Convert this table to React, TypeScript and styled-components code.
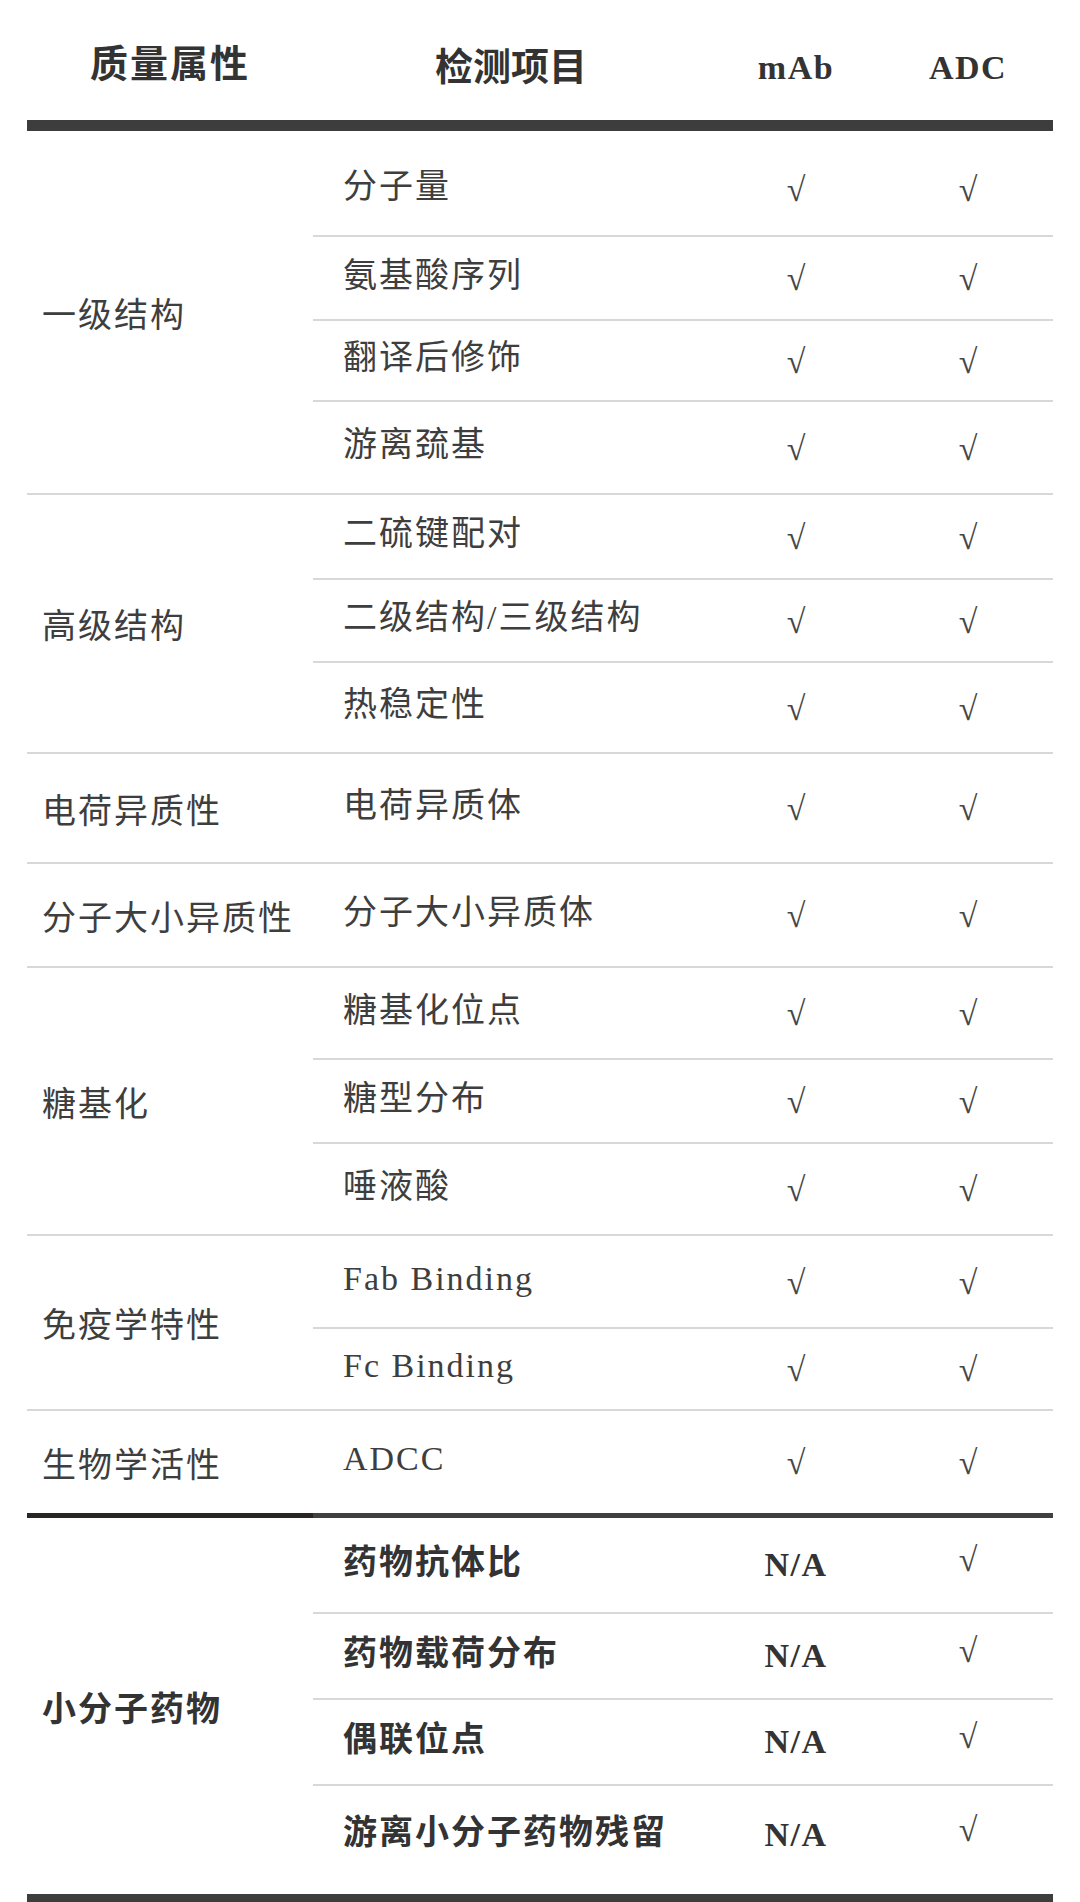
import React from "react";
import styled, { createGlobalStyle } from "styled-components";

const GlobalStyle = createGlobalStyle`
  html, body {
    margin: 0;
    padding: 0;
    background: #ffffff;
  }
  * { box-sizing: border-box; }
`;

const FONT = `"Liberation Serif", "Noto Sans CJK SC", serif`;

const Page = styled.div`
  width: 1080px;
  padding: 0 27px;
  font-family: ${FONT};
  color: #3e3e3e;
`;

const HeaderRow = styled.div`
  display: grid;
  grid-template-columns: 286px 396px 174px 170px;
  height: 131px;
  border-bottom: 11px solid #3d3d3d;
`;

const HeadCell = styled.div<{ $latin?: boolean; $dy: number; $ls: number }>`
  display: flex;
  align-items: center;
  justify-content: center;
  padding-top: ${(p) => p.$dy}px;
  font-weight: 700;
  font-size: ${(p) => (p.$latin ? "34px" : "38px")};
  letter-spacing: ${(p) => p.$ls}px;
  color: #333333;
`;

const Group = styled.div`
  display: grid;
  grid-template-columns: 286px 740px;
`;

const GroupLabel = styled.div<{ $border: number; $color: string; $bold?: boolean }>`
  display: flex;
  align-items: center;
  padding-left: 15px;
  border-top: ${(p) => p.$border}px solid ${(p) => p.$color};
  font-size: 34px;
  letter-spacing: 2px;
  white-space: nowrap;
  font-weight: ${(p) => (p.$bold ? 700 : 400)};
  color: ${(p) => (p.$bold ? "#333333" : "#3e3e3e")};
`;

const SubList = styled.div<{ $border: number; $color: string }>`
  display: flex;
  flex-direction: column;
  border-top: ${(p) => p.$border}px solid ${(p) => p.$color};
`;

const SubRow = styled.div<{ $h: number; $first: boolean; $shift: number }>`
  display: grid;
  grid-template-columns: 396px 174px 170px;
  height: ${(p) => p.$h}px;
  border-top: ${(p) => (p.$first ? "none" : "2px solid #d8d8d8")};
  padding-top: ${(p) => Math.max(p.$shift, 0)}px;
  padding-bottom: ${(p) => Math.max(-p.$shift, 0)}px;
`;

const ItemCell = styled.div<{ $bold?: boolean; $latin?: boolean }>`
  display: flex;
  align-items: center;
  padding-left: 30px;
  padding-bottom: ${(p) => (p.$latin ? "6px" : "12px")};
  font-size: 34px;
  letter-spacing: 2px;
  white-space: nowrap;
  font-weight: ${(p) => (p.$bold ? 700 : 400)};
  color: ${(p) => (p.$bold ? "#333333" : "#3e3e3e")};
`;

const MarkCell = styled.div<{ $na?: boolean; $lift?: boolean }>`
  display: flex;
  align-items: center;
  justify-content: center;
  padding-top: ${(p) => (p.$na || p.$lift ? "0" : "2px")};
  padding-bottom: ${(p) => (p.$lift ? "10px" : "0")};
  font-size: 34px;
  letter-spacing: ${(p) => (p.$na ? "1.5px" : "0")};
  font-weight: ${(p) => (p.$na ? 700 : 400)};
  color: ${(p) => (p.$na ? "#333333" : "#474747")};
`;

const BottomRule = styled.div`
  height: 10px;
  background: #3d3d3d;
`;

type Item = { name: string; h: number; mab?: string; adc?: string; shift?: number; latin?: boolean };
type GroupData = {
  label: string;
  bold?: boolean;
  border: number;
  labelColor: string;
  listColor: string;
  items: Item[];
};

const groups: GroupData[] = [
  {
    label: "一级结构",
    border: 0,
    labelColor: "transparent",
    listColor: "transparent",
    items: [
      { name: "分子量", h: 104, shift: 12 },
      { name: "氨基酸序列", h: 84 },
      { name: "翻译后修饰", h: 81 },
      { name: "游离巯基", h: 93 },
    ],
  },
  {
    label: "高级结构",
    border: 2,
    labelColor: "#d8d8d8",
    listColor: "#d8d8d8",
    items: [
      { name: "二硫键配对", h: 83 },
      { name: "二级结构/三级结构", h: 83 },
      { name: "热稳定性", h: 91 },
    ],
  },
  {
    label: "电荷异质性",
    border: 2,
    labelColor: "#d8d8d8",
    listColor: "#d8d8d8",
    items: [{ name: "电荷异质体", h: 108 }],
  },
  {
    label: "分子大小异质性",
    border: 2,
    labelColor: "#d8d8d8",
    listColor: "#d8d8d8",
    items: [{ name: "分子大小异质体", h: 102 }],
  },
  {
    label: "糖基化",
    border: 2,
    labelColor: "#d8d8d8",
    listColor: "#d8d8d8",
    items: [
      { name: "糖基化位点", h: 90 },
      { name: "糖型分布", h: 84 },
      { name: "唾液酸", h: 92 },
    ],
  },
  {
    label: "免疫学特性",
    border: 2,
    labelColor: "#d8d8d8",
    listColor: "#d8d8d8",
    items: [
      { name: "Fab Binding", h: 91, latin: true },
      { name: "Fc Binding", h: 82, latin: true },
    ],
  },
  {
    label: "生物学活性",
    border: 2,
    labelColor: "#d8d8d8",
    listColor: "#d8d8d8",
    items: [{ name: "ADCC", h: 102, latin: true }],
  },
  {
    label: "小分子药物",
    bold: true,
    border: 5,
    labelColor: "#2a2522",
    listColor: "#404040",
    items: [
      { name: "药物抗体比", h: 94, mab: "N/A" },
      { name: "药物载荷分布", h: 86, mab: "N/A" },
      { name: "偶联位点", h: 86, mab: "N/A" },
      { name: "游离小分子药物残留", h: 110, mab: "N/A", shift: -10 },
    ],
  },
];

export default function App() {
  return (
    <>
      <GlobalStyle />
      <Page>
        <HeaderRow>
          <HeadCell $dy={0} $ls={2}>
            质量属性
          </HeadCell>
          <HeadCell $dy={6} $ls={0}>
            检测项目
          </HeadCell>
          <HeadCell $latin $dy={16} $ls={1.5}>
            mAb
          </HeadCell>
          <HeadCell $latin $dy={16} $ls={1.5}>
            ADC
          </HeadCell>
        </HeaderRow>
        {groups.map((g) => (
          <Group key={g.label}>
            <GroupLabel $border={g.border} $color={g.labelColor} $bold={g.bold}>
              {g.label}
            </GroupLabel>
            <SubList $border={g.border} $color={g.listColor}>
              {g.items.map((it, i) => (
                <SubRow key={it.name} $h={it.h} $first={i === 0} $shift={it.shift ?? 0}>
                  <ItemCell $bold={g.bold} $latin={it.latin}>
                    {it.name}
                  </ItemCell>
                  <MarkCell $na={it.mab === "N/A"}>{it.mab ?? "√"}</MarkCell>
                  <MarkCell $lift={it.mab === "N/A"}>{it.adc ?? "√"}</MarkCell>
                </SubRow>
              ))}
            </SubList>
          </Group>
        ))}
        <BottomRule />
      </Page>
    </>
  );
}
